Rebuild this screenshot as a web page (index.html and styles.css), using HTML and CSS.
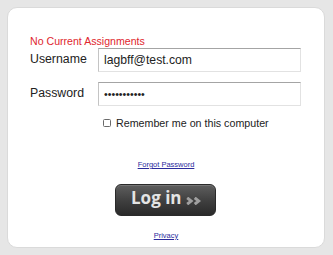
FILE: index.html
```html
<!DOCTYPE html>
<html>
<head>
<meta charset="utf-8">
<link rel="stylesheet" href="styles.css">
</head>
<body>
<div class="card">
  <div class="msg">No Current Assignments</div>
  <div class="row">
    <label class="lbl">Username</label>
    <input class="field" type="text" value="lagbff@test.com">
  </div>
  <div class="row row2">
    <label class="lbl">Password</label>
    <input class="field pass" type="password" value="xxxxxxxxxxx">
  </div>
  <div class="remember">
    <input class="chk" type="checkbox">
    <span>Remember me on this computer</span>
  </div>
  <div class="center forgot"><a href="#">Forgot Password</a></div>
  <div class="center btnwrap">
    <button class="login"><span class="login-text">Log in</span><svg class="chev" width="16" height="8" viewBox="0 0 16 8"><path d="M1.2 0.8 L5.2 4 L1.2 7.2 M8.7 0.8 L12.7 4 L8.7 7.2" fill="none" stroke="#a0a0a0" stroke-width="2.9" stroke-linejoin="miter"/></svg></button>
  </div>
  <div class="center privacy"><a href="#">Privacy</a></div>
</div>
</body>
</html>
```
FILE: styles.css
```css
html, body {
  margin: 0;
  padding: 0;
  background: #e6e6e6;
  font-family: "Liberation Sans", Arial, sans-serif;
}
.card {
  box-sizing: border-box;
  margin: 7px 0 0 7px;
  width: 318px;
  height: 241px;
  background: #fff;
  border: 1px solid #dadada;
  border-radius: 10px;
  padding: 27px 0 0 22px;
}
.msg {
  color: #e0262e;
  font-size: 10.6px;
  line-height: 13px;
}
.row {
  display: flex;
  align-items: center;
  height: 24px;
}
.row2 {
  margin-top: 10px;
}
.lbl {
  width: 68px;
  font-size: 12.3px;
  color: #222;
  position: relative;
  top: -1px;
}
.field {
  box-sizing: border-box;
  width: 203px;
  height: 24px;
  margin: 0;
  padding: 0 0 0 5px;
  border: 1px solid #e2e2e2;
  border-top-color: #a4a4a4;
  border-left-color: #c4c4c4;
  font-family: "Liberation Sans", Arial, sans-serif;
  font-size: 12.2px;
  color: #222;
  background: #fff;
  outline: none;
}
.pass {
  font-size: 10.6px;
}
.remember {
  display: flex;
  align-items: center;
  margin: 10px 0 0 72px;
  height: 14px;
  font-size: 10.7px;
  color: #222;
}
.chk {
  appearance: none;
  -webkit-appearance: none;
  box-sizing: border-box;
  width: 8px;
  height: 8px;
  margin: 0 5px 0 1px;
  border: 1px solid #6a6a6a;
  border-radius: 1.5px;
  background: #fff;
}
.center {
  margin-left: -22px;
  text-align: center;
}
.forgot, .privacy {
  font-size: 7.5px;
  line-height: 10px;
}
.forgot {
  margin-top: 30px;
}
.forgot a, .privacy a {
  color: #2b2b9c;
  text-decoration: underline;
}
.btnwrap {
  margin-top: 14px;
  height: 32px;
}
.login {
  box-sizing: border-box;
  display: inline-flex;
  align-items: center;
  width: 101px;
  height: 32px;
  margin: 0 0 0 -1px;
  padding: 0 0 0 15px;
  border: 1px solid #2a2a2a;
  border-radius: 6px;
  background: linear-gradient(#5e5e5e, #3e3e3e 55%, #2a2a2a);
  box-shadow: inset 0 1px 0 rgba(255,255,255,0.15);
}
.login-text {
  font-family: "Open Sans", sans-serif;
  font-weight: 700;
  font-size: 17px;
  line-height: 20px;
  color: #e4e4e4;
  position: relative;
  top: -2px;
}
.chev {
  display: block;
  margin-left: 4px;
  position: relative;
  top: 1px;
}
.privacy {
  margin-top: 15px;
}
```
